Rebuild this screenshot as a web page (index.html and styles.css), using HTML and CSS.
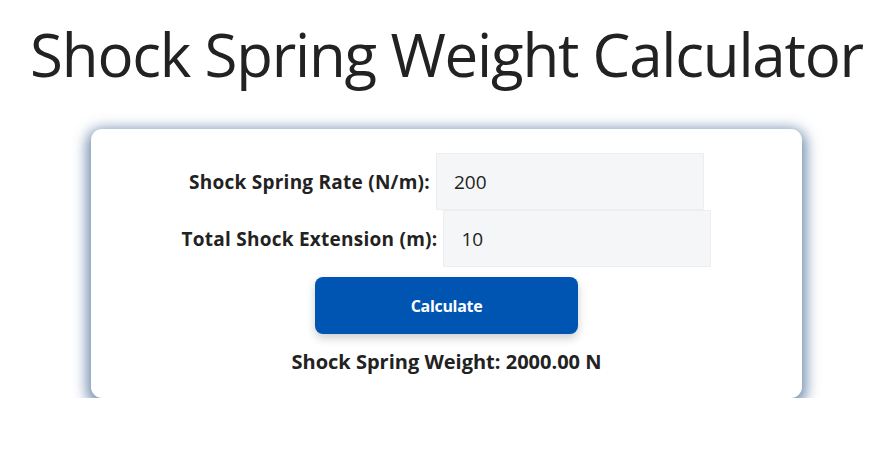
FILE: index.html
```html
<!DOCTYPE html>
<html lang="en">
<head>
<meta charset="utf-8">
<title>Shock Spring Weight Calculator</title>
<link rel="stylesheet" href="styles.css">
</head>
<body>
  <h1 class="title">Shock Spring Weight Calculator</h1>
  <div class="card">
    <div class="row">
      <label class="label" for="rate">Shock Spring Rate (N/m):</label>
      <input class="field" id="rate" type="text" value="200">
    </div>
    <div class="row">
      <label class="label" for="ext">Total Shock Extension (m):</label>
      <input class="field" id="ext" type="text" value="10">
    </div>
    <button class="btn" type="button">Calculate</button>
    <div class="result">Shock Spring Weight: 2000.00 N</div>
  </div>
</body>
</html>
```

FILE: styles.css
```css
html, body {
  margin: 0;
  padding: 0;
  background: #ffffff;
}
body {
  font-family: "Open Sans", "Noto Sans", sans-serif;
  color: #212121;
  display: flex;
  flex-direction: column;
  align-items: center;
}
.title {
  margin: 14px 0 0;
  font-size: 60px;
  font-weight: 400;
  line-height: 80px;
  color: #222222;
  letter-spacing: -1.2px;
}
.card {
  box-sizing: border-box;
  width: 711px;
  margin-top: 35px;
  padding: 24px 0 23px;
  background: #ffffff;
  border-radius: 11px;
  box-shadow: 0 4px 14px 4px rgba(50, 90, 140, 0.7);
  display: flex;
  flex-direction: column;
  align-items: center;
}
.row {
  display: flex;
  align-items: center;
  gap: 6px;
}
.label {
  font-size: 19px;
  font-weight: 700;
  color: #222222;
  letter-spacing: 0.25px;
}
.field {
  box-sizing: border-box;
  width: 268px;
  height: 57px;
  padding: 0 17px;
  border: 1px solid #eceef0;
  background: #f5f6f8;
  font-family: "Open Sans", "Noto Sans", sans-serif;
  font-size: 19px;
  color: #222222;
  outline: none;
}
.btn {
  margin-top: 10px;
  width: 263px;
  height: 57px;
  border: none;
  border-radius: 8px;
  background: #0055b3;
  color: #ffffff;
  font-family: "Open Sans", "Noto Sans", sans-serif;
  font-size: 16px;
  font-weight: 700;
  letter-spacing: -0.3px;
  box-shadow: 0 4px 10px rgba(0, 0, 0, 0.2);
}
.result {
  margin-top: 14px;
  font-size: 20px;
  font-weight: 700;
  color: #222222;
}
```
